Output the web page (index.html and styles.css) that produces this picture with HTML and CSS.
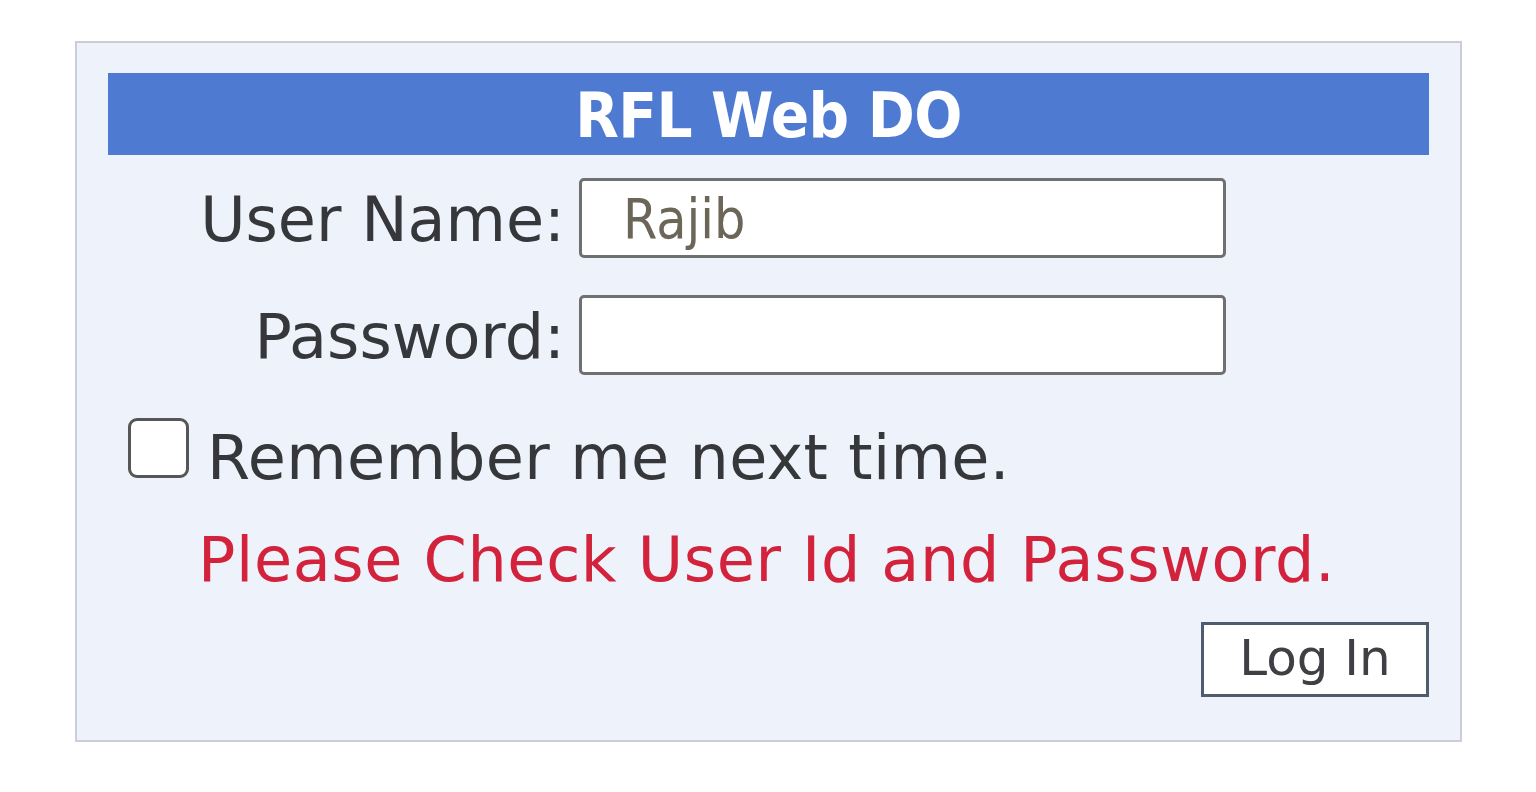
FILE: index.html
```html
<!DOCTYPE html>
<html lang="en">
<head>
<meta charset="utf-8">
<title>RFL Web DO</title>
<link rel="stylesheet" href="styles.css">
</head>
<body>
<div class="page">
  <div class="login-box">
    <div class="login-title">RFL Web DO</div>
    <div class="field-row">
      <label class="field-label" for="user">User Name:</label>
      <div class="field-input"><span class="field-value">Rajib</span></div>
    </div>
    <div class="field-row field-row-second">
      <label class="field-label" for="pass">Password:</label>
      <div class="field-input"></div>
    </div>
    <div class="remember-row">
      <span class="checkbox"></span>
      <span class="remember-text">Remember me next time.</span>
    </div>
    <div class="error-text">Please Check User Id and Password.</div>
    <div class="button-row">
      <span class="login-button">Log In</span>
    </div>
  </div>
</div>
</body>
</html>
```

FILE: styles.css
```css
html, body {
  margin: 0;
  padding: 0;
  background: #ffffff;
}

.page {
  padding: 41px 0 0 75px;
}

.login-box {
  box-sizing: border-box;
  width: 1387px;
  height: 701px;
  border: 2px solid #cbcfd5;
  background: #eef2fa;
  padding: 30px 31px 0 31px;
  font-family: "DejaVu Sans", Verdana, sans-serif;
  color: #35373a;
}

.login-title {
  height: 82px;
  background: #4e7ad1;
  color: #ffffff;
  font-family: "DejaVu Sans Condensed", "DejaVu Sans", sans-serif;
  font-weight: bold;
  font-size: 63px;
  letter-spacing: -0.6px;
  line-height: 86px;
  text-align: center;
}

.field-row {
  display: grid;
  grid-template-columns: 457px 647px;
  column-gap: 14px;
  align-items: center;
  margin-top: 23px;
  height: 80px;
}

.field-row-second {
  margin-top: 37px;
}

.field-label {
  text-align: right;
  font-size: 62px;
  line-height: 72px;
  white-space: nowrap;
  padding-top: 4px;
}

.field-input {
  box-sizing: border-box;
  height: 80px;
  background: #ffffff;
  border: 3px solid #6f7072;
  border-radius: 5px;
  display: flex;
  align-items: center;
  padding-left: 41px;
}

.field-value {
  font-family: "DejaVu Sans Condensed", "DejaVu Sans", sans-serif;
  font-size: 55px;
  color: #6c6659;
  padding-top: 2px;
}

.remember-row {
  display: flex;
  align-items: flex-start;
  margin-top: 43px;
  padding-left: 20px;
}

.checkbox {
  box-sizing: border-box;
  width: 61px;
  height: 60px;
  border: 3px solid #565656;
  border-radius: 9px;
  background: #ffffff;
}

.remember-text {
  margin-left: 18px;
  margin-top: 4px;
  font-size: 62px;
  line-height: 72px;
  letter-spacing: 0.35px;
  white-space: nowrap;
}

.error-text {
  margin-top: 30px;
  padding-left: 90px;
  font-size: 62px;
  line-height: 72px;
  letter-spacing: 0.65px;
  color: #d3223b;
  white-space: nowrap;
}

.button-row {
  display: flex;
  justify-content: flex-end;
  margin-top: 26px;
}

.login-button {
  box-sizing: border-box;
  width: 228px;
  height: 75px;
  border: 3px solid #4f5c6d;
  background: #ffffff;
  font-size: 50px;
  line-height: 66px;
  text-align: center;
  color: #3e4044;
}
```
